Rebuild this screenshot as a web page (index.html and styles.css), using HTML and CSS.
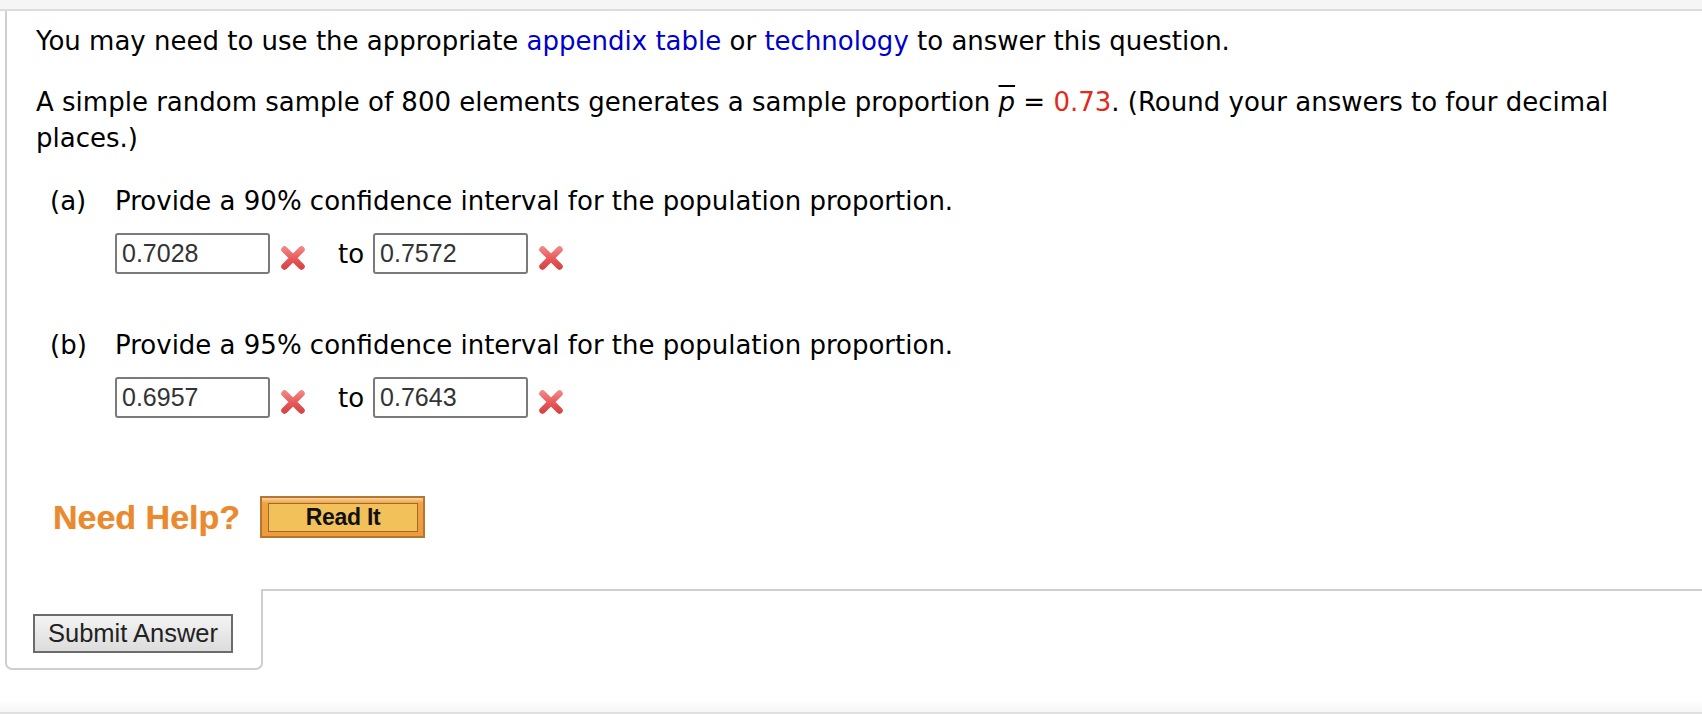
FILE: index.html
```html
<!DOCTYPE html>
<html lang="en">
<head>
<meta charset="utf-8">
<title>Question</title>
<link rel="stylesheet" href="styles.css">
</head>
<body>
<div class="topbar"></div>
<div class="question">
  <p class="intro">You may need to use the appropriate <a class="link">appendix table</a> or <a class="link">technology</a> to answer this question.</p>
  <p class="stem">A simple random sample of 800 elements generates a sample proportion <span class="pbar">p</span> = <span class="given">0.73</span>. (Round your answers to four decimal places.)</p>

  <div class="part">
    <div class="part-head"><span class="label">(a)</span><span>Provide a 90% confidence interval for the population proportion.</span></div>
    <div class="answers">
      <span class="field">0.7028</span>
      <svg class="xmark" viewBox="0 0 26 26" width="26" height="26"><defs><linearGradient id="xg1" x1="0" y1="0" x2="0" y2="26" gradientUnits="userSpaceOnUse"><stop offset="0" stop-color="#f39090"/><stop offset="0.5" stop-color="#e85c5c"/><stop offset="1" stop-color="#d43c3c"/></linearGradient></defs><path d="M4.5 4.5 L21.5 21.5 M21.5 4.5 L4.5 21.5" stroke="url(#xg1)" stroke-width="6.5" stroke-linecap="round"/></svg>
      <span class="to">to</span>
      <span class="field">0.7572</span>
      <svg class="xmark" viewBox="0 0 26 26" width="26" height="26"><defs><linearGradient id="xg2" x1="0" y1="0" x2="0" y2="26" gradientUnits="userSpaceOnUse"><stop offset="0" stop-color="#f39090"/><stop offset="0.5" stop-color="#e85c5c"/><stop offset="1" stop-color="#d43c3c"/></linearGradient></defs><path d="M4.5 4.5 L21.5 21.5 M21.5 4.5 L4.5 21.5" stroke="url(#xg2)" stroke-width="6.5" stroke-linecap="round"/></svg>
    </div>
  </div>

  <div class="part part-b">
    <div class="part-head"><span class="label">(b)</span><span>Provide a 95% confidence interval for the population proportion.</span></div>
    <div class="answers">
      <span class="field">0.6957</span>
      <svg class="xmark" viewBox="0 0 26 26" width="26" height="26"><defs><linearGradient id="xg3" x1="0" y1="0" x2="0" y2="26" gradientUnits="userSpaceOnUse"><stop offset="0" stop-color="#f39090"/><stop offset="0.5" stop-color="#e85c5c"/><stop offset="1" stop-color="#d43c3c"/></linearGradient></defs><path d="M4.5 4.5 L21.5 21.5 M21.5 4.5 L4.5 21.5" stroke="url(#xg3)" stroke-width="6.5" stroke-linecap="round"/></svg>
      <span class="to">to</span>
      <span class="field">0.7643</span>
      <svg class="xmark" viewBox="0 0 26 26" width="26" height="26"><defs><linearGradient id="xg4" x1="0" y1="0" x2="0" y2="26" gradientUnits="userSpaceOnUse"><stop offset="0" stop-color="#f39090"/><stop offset="0.5" stop-color="#e85c5c"/><stop offset="1" stop-color="#d43c3c"/></linearGradient></defs><path d="M4.5 4.5 L21.5 21.5 M21.5 4.5 L4.5 21.5" stroke="url(#xg4)" stroke-width="6.5" stroke-linecap="round"/></svg>
    </div>
  </div>

  <div class="help">
    <span class="need">Need Help?</span>
    <span class="readit"><span class="readit-inner">Read It</span></span>
  </div>
</div>
<div class="footer">
  <div class="tab"><button class="submit" type="button">Submit Answer</button></div>
  <div class="filler"></div>
</div>
<div class="pagebottom"></div>
</body>
</html>
```

FILE: styles.css
```css
html, body {
  margin: 0;
  padding: 0;
  background: #ffffff;
}

body {
  font-family: "DejaVu Sans", Verdana, sans-serif;
  font-size: 26px;
  color: #000000;
  overflow: hidden;
}

.topbar {
  height: 9px;
  background: #f5f5f5;
  border-bottom: 2px solid #dcdcdc;
}

.question {
  margin-left: 5px;
  border-left: 2px solid #cfcfcf;
  padding: 12px 20px 51px 29px;
}

.question p {
  margin: 0;
  line-height: 36px;
}

.intro {
  margin-bottom: 25px !important;
}

.link {
  color: #0000cc;
  text-decoration: none;
}

.pbar {
  font-style: italic;
  text-decoration: overline;
  text-decoration-thickness: 2px;
}

.given {
  color: #e3281c;
}

.part {
  margin-top: 27px;
}

.part-b {
  margin-top: 53px;
}

.part-head {
  display: flex;
  line-height: 36px;
  padding-left: 14px;
}

.label {
  width: 65px;
  flex: none;
}

.answers {
  display: flex;
  align-items: center;
  margin-top: 14px;
  padding-left: 79px;
  height: 41px;
}

.field {
  box-sizing: border-box;
  width: 155px;
  height: 41px;
  border: 2px solid #7a7a7a;
  border-radius: 3px;
  padding: 0 5px;
  display: flex;
  align-items: center;
  font-family: "Liberation Sans", Arial, sans-serif;
  font-size: 25px;
  color: #333333;
  background: #ffffff;
}

.xmark {
  flex: none;
  margin-left: 10px;
  margin-top: 8px;
}

.to {
  margin-left: 32px;
  margin-right: 9px;
}

.help {
  display: flex;
  align-items: center;
  margin-top: 78px;
  height: 42px;
}

.need {
  margin-left: 17px;
  font-family: "Liberation Sans", Arial, sans-serif;
  font-weight: bold;
  font-size: 34px;
  color: #e98a30;
  text-shadow: 0 0 1px rgba(233, 138, 48, 0.6);
}

.readit {
  box-sizing: border-box;
  margin-left: 20px;
  width: 165px;
  height: 42px;
  border: 2px solid #b5762f;
  background: linear-gradient(#f8d3a0 0, #f0a344 5px, #ee9b3c 100%);
  padding: 5px 5px 4px 6px;
  display: flex;
}

.readit-inner {
  flex: 1;
  display: flex;
  align-items: center;
  justify-content: center;
  border: 1px solid #9c6a2c;
  background: #f3c15a;
  font-family: "Liberation Sans", Arial, sans-serif;
  font-weight: bold;
  font-size: 23px;
  color: #111111;
  letter-spacing: -0.3px;
}

.footer {
  display: flex;
  align-items: flex-start;
}

.tab {
  box-sizing: border-box;
  width: 258px;
  margin-left: 5px;
  border-left: 2px solid #cfcfcf;
  border-right: 2px solid #cfcfcf;
  border-bottom: 2px solid #cfcfcf;
  border-radius: 0 0 7px 7px;
  padding: 25px 0 15px 26px;
}

.submit {
  box-sizing: border-box;
  width: 200px;
  height: 39px;
  margin: 0;
  padding: 0;
  border: 2px solid #6b6b6b;
  border-radius: 0;
  background: linear-gradient(#f4f4f4, #dcdcdc);
  font-family: "Liberation Sans", Arial, sans-serif;
  font-size: 25.5px;
  color: #222222;
  display: block;
}

.filler {
  flex: 1;
  border-top: 2px solid #cfcfcf;
}

.pagebottom {
  margin-top: 30px;
  height: 15px;
  background: linear-gradient(#ffffff 0, #f6f6f6 78%, #dedede 80%, #e6e6e6 100%);
}
```
